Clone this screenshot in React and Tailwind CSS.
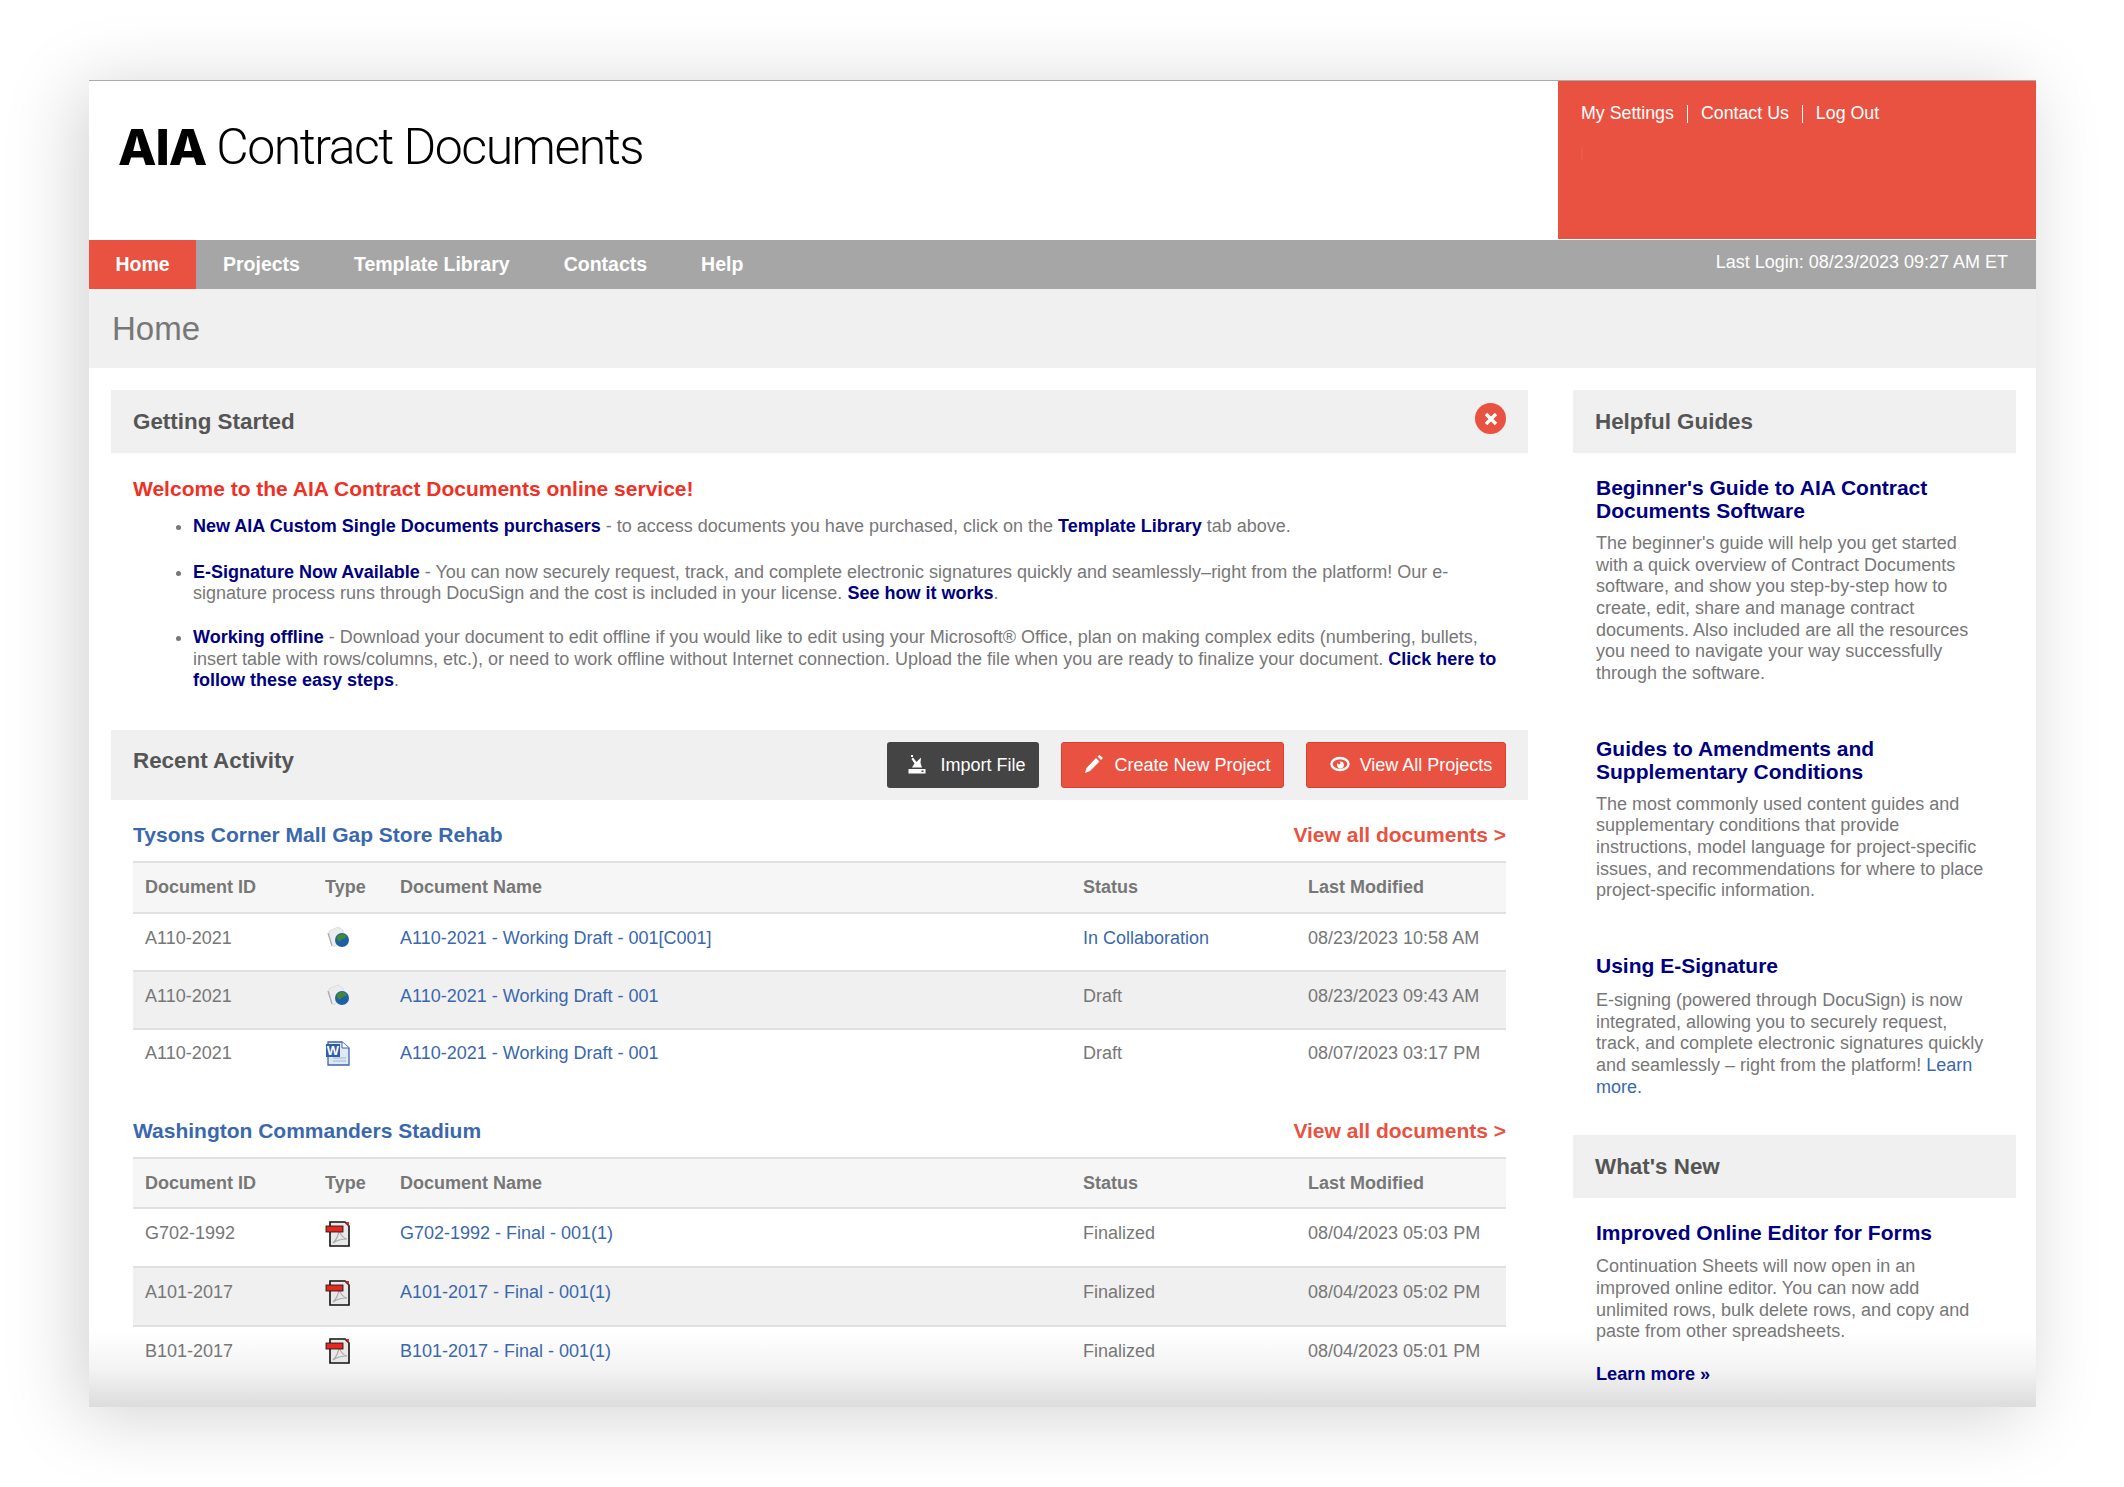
import React from "react";

const FONT = "font-['Liberation_Sans',Arial,sans-serif]";

const GlobeIcon = () => (
  <svg width="26" height="24" viewBox="0 0 26 24" className="block">
    <path d="M4 5 L13 1 L18 4 L19 12 L9 21 L6 18 Z" fill="#ececec" stroke="#d8d8d8" strokeWidth="0.8" />
    <path d="M3 7 L7 20" stroke="#a8a8a8" strokeWidth="1.2" />
    <circle cx="17" cy="14" r="7" fill="#1f5fa8" />
    <path d="M11.5 11 C13 8 19 6.5 22 10 C21 13 17 12 15 15.5 C13 15.5 11.5 13 11.5 11 Z" fill="#3f8a3a" />
  </svg>
);

const WordIcon = () => (
  <svg width="26" height="26" viewBox="0 0 26 26" className="block">
    <path d="M3 1 H17 L24 7 V24 H3 Z" fill="#dfe8f5" stroke="#3d66ab" strokeWidth="1.3" />
    <path d="M17 1 V7 H24" fill="#fff" stroke="#3d66ab" strokeWidth="1" />
    <path d="M8 17 H21 M8 20 H21" stroke="#9db6d9" strokeWidth="1" />
    <rect x="1" y="3" width="14" height="13" fill="#2f5da6" />
    <text x="8" y="14" textAnchor="middle" fontSize="13" fontWeight="700" fill="#fff" fontFamily="Liberation Sans">W</text>
  </svg>
);

const PdfIcon = () => (
  <svg width="26" height="26" viewBox="0 0 26 26" className="block">
    <path d="M5 1 H20 L24 5 V25 H5 Z" fill="#e8e8e8" stroke="#111" strokeWidth="1.6" />
    <path d="M8 22 C12 18 14 12 14 8 C15 13 18 17 22 18 C17 18 12 19 8 22 Z" fill="none" stroke="#aaa" strokeWidth="1.2" />
    <rect x="1" y="5" width="17" height="6" fill="#e8281e" stroke="#111" strokeWidth="0.8" />
    <path d="M20 1 L24 1 L24 5 Z" fill="#e8281e" />
  </svg>
);

const Button = ({ dark, icon, label, width }) => (
  <a
    className={`flex h-[46px] items-center justify-center gap-[10px] rounded-[3px] text-[18px] text-white ${width} ${
      dark ? "bg-[#444444] pl-[8px]" : "border border-[#d9402f] bg-[#e95240] pl-[10px]"
    }`}
  >
    {icon}
    <span>{label}</span>
  </a>
);

const docs1 = [
  { id: "A110-2021", icon: <GlobeIcon />, name: "A110-2021 - Working Draft - 001[C001]", status: "In Collaboration", date: "08/23/2023 10:58 AM" },
  { id: "A110-2021", icon: <GlobeIcon />, name: "A110-2021 - Working Draft - 001", status: "Draft", date: "08/23/2023 09:43 AM" },
  { id: "A110-2021", icon: <WordIcon />, name: "A110-2021 - Working Draft - 001", status: "Draft", date: "08/07/2023 03:17 PM" },
];

const docs2 = [
  { id: "G702-1992", icon: <PdfIcon />, name: "G702-1992 - Final - 001(1)", status: "Finalized", date: "08/04/2023 05:03 PM" },
  { id: "A101-2017", icon: <PdfIcon />, name: "A101-2017 - Final - 001(1)", status: "Finalized", date: "08/04/2023 05:02 PM" },
  { id: "B101-2017", icon: <PdfIcon />, name: "B101-2017 - Final - 001(1)", status: "Finalized", date: "08/04/2023 05:01 PM" },
];

const DocTable = ({ title, rows, className, rowHeight, headHeight }) => (
  <div className={className}>
    <div className="flex h-[27px] items-center justify-between">
      <a className="text-[21px] font-bold text-[#3a68ae]">{title}</a>
      <a className="text-[21px] font-bold text-[#e95240]">View all documents &gt;</a>
    </div>
    <table className="mt-[13px] w-full table-fixed border-t-2 border-[#e0e0e0] text-left text-[18px]">
      <thead>
        <tr className={`${headHeight} border-b-2 border-[#e0e0e0] bg-[#f6f6f6] text-[#777777]`}>
          <th className="w-[192px] pl-[12px] font-bold">Document ID</th>
          <th className="w-[75px] font-bold">Type</th>
          <th className="w-[683px] font-bold">Document Name</th>
          <th className="w-[225px] font-bold">Status</th>
          <th className="font-bold">Last Modified</th>
        </tr>
      </thead>
      <tbody>
        {rows.map((row, i) => {
          const pad = i === 2 ? "pb-[10px]" : "pb-[8px]";
          return (
            <tr key={i} className={`${rowHeight} text-[#777777] ${i === 1 ? "bg-[#f0f0f0]" : ""} ${i < 2 ? "border-b-2 border-[#e0e0e0]" : ""}`}>
              <td className={`${pad} pl-[12px]`}>{row.id}</td>
              <td className={pad}>{row.icon}</td>
              <td className={`${pad} text-[#3a68ae]`}>{row.name}</td>
              <td className={`${pad} ${row.status === "In Collaboration" ? "text-[#3a68ae]" : ""}`}>{row.status}</td>
              <td className={pad}>{row.date}</td>
            </tr>
          );
        })}
      </tbody>
    </table>
  </div>
);

const Guide = ({ title, children, className, gap = "mt-[11px]" }) => (
  <div className={className}>
    <h3 className="text-[21px] font-bold leading-[23px] text-[#000080]">{title}</h3>
    <p className={`${gap} text-[18px] leading-[21.67px] text-[#777777]`}>{children}</p>
  </div>
);

export default function App() {
  return (
    <div className={`h-[1487px] w-[2124px] overflow-hidden bg-white pl-[89px] pt-[80px] ${FONT}`}>
      <div className="relative h-[1327px] w-[1947px] overflow-hidden border-t border-[#aaaaaa] bg-white shadow-[-10px_8px_70px_rgba(0,0,0,0.18)]">
        <div className="absolute inset-x-0 bottom-0 z-0 h-[75px] bg-gradient-to-b from-transparent via-[#f3f3f3] to-[#dcdcdc]" />

        <div className="relative z-10">
          <header className="flex h-[159px]">
            <div className="flex flex-1 items-start bg-white pl-[29px] pt-[36px] text-[50px] leading-[60px] text-black">
              <span className="font-['Inter',sans-serif] font-extrabold tracking-[-1px]">AIA</span>
              <span className="ml-[10px] font-['Roboto',sans-serif] font-light tracking-[-1.5px]">Contract Documents</span>
            </div>
            <div className="h-[158px] w-[478px] bg-[#e95240] pl-[23px] pt-[24px] text-[17.8px] text-white">
              <div className="flex h-[18px] items-center leading-none">
                <a>My Settings</a>
                <span className="mx-[13px] h-[18px] w-px bg-white" />
                <a>Contact Us</a>
                <span className="mx-[13px] h-[18px] w-px bg-white" />
                <a>Log Out</a>
              </div>
              <div className="mt-[24px] h-[13px] w-[2px] bg-[#ea5a49]" />
            </div>
          </header>

          <nav className="flex h-[49px] items-stretch justify-between bg-[#a6a6a6] text-white">
            <div className="flex text-[19.5px] font-bold">
              <a className="flex w-[107px] items-center justify-center bg-[#e95240]">Home</a>
              <a className="flex items-center pl-[27px]">Projects</a>
              <a className="flex items-center pl-[54px]">Template Library</a>
              <a className="flex items-center pl-[54px]">Contacts</a>
              <a className="flex items-center pl-[54px]">Help</a>
            </div>
            <div className="pr-[28px] pt-[9px] text-[18px]">Last Login: 08/23/2023 09:27 AM ET</div>
          </nav>

          <div className="flex h-[79px] items-center bg-[#f0f0f0] pl-[23px] text-[33px] text-[#777777]">Home</div>

          <div className="flex pl-[22px] pt-[22px]">
            <main className="w-[1417px]">
              <div className="flex h-[63px] items-center justify-between bg-[#f0f0f0] pl-[22px] pr-[22px]">
                <h2 className="text-[22.4px] font-bold text-[#555555]">Getting Started</h2>
                <span className="mb-[6px] flex h-[31px] w-[31px] items-center justify-center rounded-full bg-[#e95240]">
                  <svg width="16" height="16" viewBox="0 0 16 16">
                    <path d="M3 3 L13 13 M13 3 L3 13" stroke="#fff" strokeWidth="3.4" />
                  </svg>
                </span>
              </div>

              <div className="pl-[22px] pr-[22px] pt-[24px]">
                <h1 className="text-[21px] font-bold leading-[24px] text-[#ee3124]">Welcome to the AIA Contract Documents online service!</h1>
                <ul className="ml-[38px] mt-[15px] list-disc text-[18px] leading-[21.67px] text-[#777777] marker:text-[#777777]">
                  <li className="ml-[22px]">
                    <b className="text-[#000080]">New AIA Custom Single Documents purchasers</b> - to access documents you have purchased, click on the{" "}
                    <b className="text-[#000080]">Template Library</b> tab above.
                  </li>
                  <li className="ml-[22px] mt-[24px]">
                    <b className="text-[#000080]">E-Signature Now Available</b> - You can now securely request, track, and complete electronic signatures quickly and seamlessly–right from the platform! Our e-signature process runs through DocuSign and the cost is included in your license.{" "}
                    <b className="text-[#000080]">See how it works</b>.
                  </li>
                  <li className="ml-[22px] mt-[22px]">
                    <b className="text-[#000080]">Working offline</b> - Download your document to edit offline if you would like to edit using your Microsoft® Office, plan on making complex edits (numbering, bullets, insert table with rows/columns, etc.), or need to work offline without Internet connection. Upload the file when you are ready to finalize your document.{" "}
                    <b className="text-[#000080]">Click here to follow these easy steps</b>.
                  </li>
                </ul>
              </div>

              <div className="mt-[38px] flex h-[70px] items-center justify-between bg-[#f0f0f0] pl-[22px] pr-[22px]">
                <h2 className="mb-[8px] text-[22.4px] font-bold text-[#555555]">Recent Activity</h2>
                <div className="flex gap-[22px]">
                  <Button
                    dark
                    width="w-[152px]"
                    label="Import File"
                    icon={
                      <svg width="18" height="20" viewBox="0 0 18 20" fill="#fff" className="mb-[2px] mr-[4px]">
                        <path d="M4 13.5 H14 L12.5 9 L13 3.5 L10.5 6 L8.5 8 L5 3.5 L3.5 5 L6.5 9.5 Z" />
                        <rect x="3" y="1" width="2" height="2" />
                        <path d="M0.5 15 H17.5 V19.5 H0.5 Z M13.5 16.5 V18 H15.5 V16.5 Z" fillRule="evenodd" />
                      </svg>
                    }
                  />
                  <Button
                    width="w-[223px]"
                    label="Create New Project"
                    icon={
                      <svg width="20" height="20" viewBox="0 0 20 20" fill="#fff" className="mb-[2px]">
                        <path d="M1 19 L2.5 14 L12 4 L15.5 7.5 L6 17 Z" />
                        <path d="M13.5 2.5 L15.5 1 L19 4 L17 6 Z" />
                      </svg>
                    }
                  />
                  <Button
                    width="w-[200px]"
                    label="View All Projects"
                    icon={
                      <svg width="20" height="16" viewBox="0 0 20 16" className="mb-[3px]">
                        <ellipse cx="10" cy="8" rx="8.5" ry="6" fill="none" stroke="#fff" strokeWidth="2.4" />
                        <circle cx="10.5" cy="9" r="3.4" fill="#fff" />
                        <circle cx="9" cy="7" r="1.4" fill="#e95240" />
                      </svg>
                    }
                  />
                </div>
              </div>

              <div className="pl-[22px] pr-[22px]">
                <DocTable className="pt-[21px]" headHeight="h-[51px]" rowHeight="h-[58px]" title="Tysons Corner Mall Gap Store Rehab" rows={docs1} />
                <DocTable className="pt-[30px]" headHeight="h-[50px]" rowHeight="h-[59px]" title="Washington Commanders Stadium" rows={docs2} />
              </div>
            </main>

            <aside className="ml-[45px] w-[443px]">
              <div className="flex h-[63px] items-center bg-[#f0f0f0] pl-[22px] text-[22.4px] font-bold text-[#555555]">Helpful Guides</div>
              <div className="pl-[23px] pr-[30px]">
                <Guide className="pt-[23px]" title="Beginner's Guide to AIA Contract Documents Software">
                  The beginner's guide will help you get started with a quick overview of Contract Documents software, and show you step-by-step how to create, edit, share and manage contract documents. Also included are all the resources you need to navigate your way successfully through the software.
                </Guide>
                <Guide className="pt-[52px]" title="Guides to Amendments and Supplementary Conditions">
                  The most commonly used content guides and supplementary conditions that provide instructions, model language for project-specific issues, and recommendations for where to place project-specific information.
                </Guide>
                <Guide className="pt-[52px]" gap="mt-[13px]" title="Using E-Signature">
                  E-signing (powered through DocuSign) is now integrated, allowing you to securely request, track, and complete electronic signatures quickly and seamlessly – right from the platform! <a className="text-[#3a68ae]">Learn more.</a>
                </Guide>
              </div>
              <div className="mt-[37px] flex h-[63px] items-center bg-[#f0f0f0] pl-[22px] text-[22.4px] font-bold text-[#555555]">What's New</div>
              <div className="pl-[23px] pr-[30px]">
                <Guide className="pt-[23px]" gap="mt-[12px]" title="Improved Online Editor for Forms">
                  Continuation Sheets will now open in an improved online editor. You can now add unlimited rows, bulk delete rows, and copy and paste from other spreadsheets.
                </Guide>
                <a className="mt-[18px] block text-[18.2px] font-bold text-[#000080]">Learn more »</a>
              </div>
            </aside>
          </div>
        </div>
      </div>
    </div>
  );
}
